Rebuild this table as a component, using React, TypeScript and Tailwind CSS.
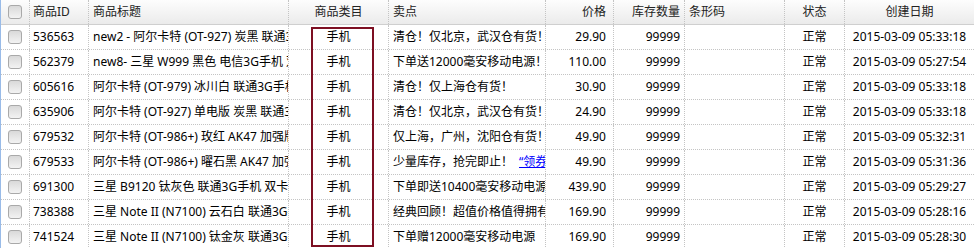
import React from 'react';

type Row = {
  id: string;
  title: string;
  point: string;
  link?: string;
  price: string;
  date: string;
};

const rows: Row[] = [
  { id: '536563', title: 'new2 - 阿尔卡特 (OT-927) 炭黑 联通3G手机 双卡双待', point: '清仓！仅北京，武汉仓有货！', price: '29.90', date: '2015-03-09 05:33:18' },
  { id: '562379', title: 'new8- 三星 W999 黑色 电信3G手机 双卡双待双通', point: '下单送12000毫安移动电源！', price: '110.00', date: '2015-03-09 05:27:54' },
  { id: '605616', title: '阿尔卡特 (OT-979) 冰川白 联通3G手机', point: '清仓！仅上海仓有货！', price: '30.90', date: '2015-03-09 05:33:18' },
  { id: '635906', title: '阿尔卡特 (OT-927) 单电版 炭黑 联通3G手机', point: '清仓！仅北京，武汉仓有货！', price: '24.90', date: '2015-03-09 05:33:18' },
  { id: '679532', title: '阿尔卡特 (OT-986+) 玫红 AK47 加强版 联通3G手机', point: '仅上海，广州，沈阳仓有货！', price: '49.90', date: '2015-03-09 05:32:31' },
  { id: '679533', title: '阿尔卡特 (OT-986+) 曜石黑 AK47 加强版', point: '少量库存，抢完即止！', link: '“领券”', price: '49.90', date: '2015-03-09 05:31:36' },
  { id: '691300', title: '三星 B9120 钛灰色 联通3G手机 双卡双待', point: '下单即送10400毫安移动电源！', price: '439.90', date: '2015-03-09 05:29:27' },
  { id: '738388', title: '三星 Note II (N7100) 云石白 联通3G手机', point: '经典回顾！超值价格值得拥有。', price: '169.90', date: '2015-03-09 05:28:16' },
  { id: '741524', title: '三星 Note II (N7100) 钛金灰 联通3G手机', point: '下单赠12000毫安移动电源', price: '169.90', date: '2015-03-09 05:28:30' },
];

const Check = () => (
  <div className="w-[14px] h-[14px] rounded-[3px] border border-[#a9a9a9] bg-gradient-to-b from-[#d9d9d9] to-[#f3f3f3]" />
);

const cell = 'h-full flex items-center shrink-0 overflow-hidden whitespace-nowrap border-r border-dotted border-[#c4c4c4]';

const App: React.FC = () => {
  return (
    <div
      className="relative w-[974px] h-[248px] overflow-hidden bg-white text-[12px] text-black"
      style={{ fontFamily: '"Noto Sans", "Noto Sans CJK SC", sans-serif' }}
    >
      <div className="border-l border-[#99bbe8]">
        {/* header */}
        <div className="flex h-[25px] border-b border-[#cfcfcf] bg-gradient-to-b from-[#fdfdfd] to-[#ebebeb] text-[#222]">
          <div className={`${cell} w-[29px] justify-center`}><Check /></div>
          <div className={`${cell} w-[59px] pl-[3px]`}>商品ID</div>
          <div className={`${cell} w-[200px] pl-[4px]`}>商品标题</div>
          <div className={`${cell} w-[100px] justify-center`}>商品类目</div>
          <div className={`${cell} w-[157px] pl-[4px]`}>卖点</div>
          <div className={`${cell} w-[68px] justify-end pr-[7px]`}>价格</div>
          <div className={`${cell} w-[71px] justify-end pr-[4px]`}>库存数量</div>
          <div className={`${cell} w-[100px] pl-[4px]`}>条形码</div>
          <div className={`${cell} w-[60px] justify-center`}>状态</div>
          <div className="h-full flex items-center justify-center w-[129px]">创建日期</div>
        </div>

        {/* body */}
        {rows.map((r) => (
          <div key={r.id} className="flex h-[25px] border-b border-dotted border-[#c4c4c4]">
            <div className={`${cell} w-[29px] justify-center`}><Check /></div>
            <div className={`${cell} w-[59px] pl-[3px]`}>{r.id}</div>
            <div className={`${cell} w-[200px] pl-[4px]`}>{r.title}</div>
            <div className={`${cell} w-[100px] justify-center`}>手机</div>
            <div className={`${cell} w-[157px] pl-[4px]`}>
              {r.point}
              {r.link && <a className="ml-[6px] text-[#0000ff] underline">{r.link}</a>}
            </div>
            <div className={`${cell} w-[68px] justify-end pr-[7px]`}>{r.price}</div>
            <div className={`${cell} w-[71px] justify-end pr-[4px]`}>99999</div>
            <div className={`${cell} w-[100px]`} />
            <div className={`${cell} w-[60px] justify-center`}>正常</div>
            <div className="h-full flex items-center justify-center w-[129px] overflow-hidden whitespace-nowrap">{r.date}</div>
          </div>
        ))}
      </div>

      {/* highlight box over the category column */}
      <div className="absolute left-[311px] top-[27px] w-[63px] h-[220px] border-2 border-[#7d0f22]" />
    </div>
  );
};

export default App;
